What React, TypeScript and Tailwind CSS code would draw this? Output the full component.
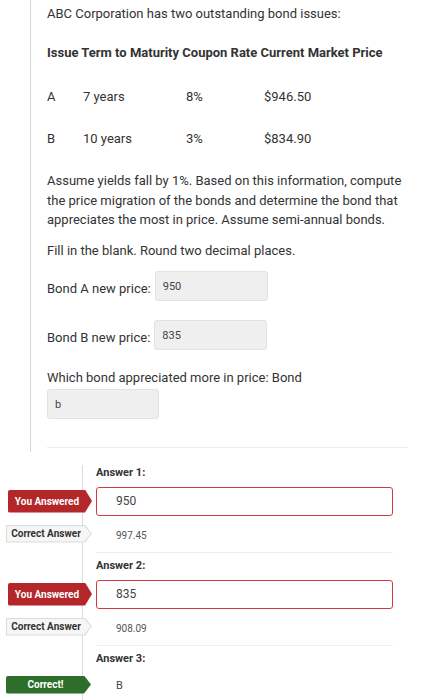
import type { ReactNode } from 'react';

const rows = [
    { issue: 'A', term: '7 years', rate: '8%', price: '$946.50' },
    { issue: 'B', term: '10 years', rate: '3%', price: '$834.90' },
];

const arrow = '[clip-path:polygon(0_0,calc(100%-7px)_0,100%_50%,calc(100%-7px)_100%,0_100%)]';

const Tag = ({ kind, children }: { kind: 'wrong' | 'correct' | 'right'; children: ReactNode }) => {
    if (kind === 'correct') {
        return (
            <div className={`h-[18px] w-[86px] bg-[#dcdcdc] p-px ${arrow}`}>
                <div className={`flex h-full items-center justify-center pr-[6px] bg-[#f6f6f6] text-[10px] font-bold text-[#333] ${arrow}`}>
                    {children}
                </div>
            </div>
        );
    }
    return (
        <div
            className={`flex items-center justify-center pr-[6px] text-[10px] font-bold text-white rounded-l-[2px] ${arrow} ${
                kind === 'wrong' ? 'h-[23px] w-[84px] bg-[#b3262a]' : 'h-[18px] w-[85px] bg-[#2e6e2b]'
            }`}
        >
            {children}
        </div>
    );
};

const Answer = ({ n, given, correct, last }: { n: number; given: string; correct?: string; last?: boolean }) => (
    <div className={last ? '' : 'border-b border-[#eeeeee] pb-[8px] mb-[6px]'}>
        <div className="text-[11px] font-bold text-[#333] leading-[14px] mb-[7px]">Answer {n}:</div>
        {correct ? (
            <>
                <div className="relative">
                    <div className="absolute left-[-88px] top-[3px]">
                        <Tag kind="wrong">You Answered</Tag>
                    </div>
                    <div className="h-[29px] w-[297px] rounded-[3px] border-[1.5px] border-[#d23a40] flex items-center pl-[19px] text-[12px] text-[#444]">
                        {given}
                    </div>
                </div>
                <div className="relative h-[28px] flex items-center pl-[20px] text-[10px] text-[#555]">
                    <div className="absolute left-[-90px] top-[9px]">
                        <Tag kind="correct">Correct Answer</Tag>
                    </div>
                    <span className="mt-[12px]">{correct}</span>
                </div>
            </>
        ) : (
            <div className="relative h-[28px] flex items-center pl-[20px] text-[11px] text-[#444]">
                <div className="absolute left-[-90px] top-[3px]">
                    <Tag kind="right">Correct!</Tag>
                </div>
                <span>{given}</span>
            </div>
        )}
    </div>
);

const Field = ({ value, className = '' }: { value: string; className?: string }) => (
    <div className={`h-[30px] w-[112px] rounded-[3px] border border-[#e2e2e2] bg-[#efefef] pl-[7px] pt-[5px] text-[11px] text-[#444] ${className}`}>
        {value}
    </div>
);

export default function App() {
    return (
        <div className="w-[443px] h-[700px] overflow-hidden bg-white font-['Roboto','Liberation_Sans',sans-serif] text-[#333]">
            <div className="ml-[30px] w-[382px] border-l border-[#d6d6d6] pl-[16px] pt-[4px] pb-[4px] text-[13px] leading-[20px]">
                <p>ABC Corporation has two outstanding bond issues:</p>
                <p className="mt-[19px] font-bold">Issue Term to Maturity Coupon Rate Current Market Price</p>
                <div className="mt-[24px] space-y-[22px]">
                    {rows.map(r => (
                        <div key={r.issue} className="flex">
                            <span className="w-[36px]">{r.issue}</span>
                            <span className="w-[103px]">{r.term}</span>
                            <span className="w-[78px]">{r.rate}</span>
                            <span>{r.price}</span>
                        </div>
                    ))}
                </div>
                <p className="mt-[22px] leading-[19.5px]">
                    Assume yields fall by 1%. Based on this information, compute the price migration of the bonds and
                    determine the bond that appreciates the most in price. Assume semi-annual bonds.
                </p>
                <p className="mt-[11px]">Fill in the blank. Round two decimal places.</p>
                <div className="mt-[10px] flex items-end gap-[4px]">
                    <span className="pb-[2px]">Bond A new price:</span>
                    <Field value="950" className="w-[113px]" />
                </div>
                <div className="mt-[19px] flex items-end gap-[4px]">
                    <span className="pb-[2px]">Bond B new price:</span>
                    <Field value="835" className="w-[113px]" />
                </div>
                <p className="mt-[18px]">Which bond appreciated more in price: Bond</p>
                <Field value="b" className="mt-[1px] h-[29px]" />
                <div className="mt-[28px] h-px w-[361px] bg-[#ececec]" />
            </div>
            <div className="mt-[13px] ml-[82px] w-[311px] border-l border-[#dcdcdc] pl-[13px] pt-[1px] h-[240px]">
                <Answer n={1} given="950" correct="997.45" />
                <Answer n={2} given="835" correct="908.09" />
                <Answer n={3} given="B" last />
            </div>
        </div>
    );
}
